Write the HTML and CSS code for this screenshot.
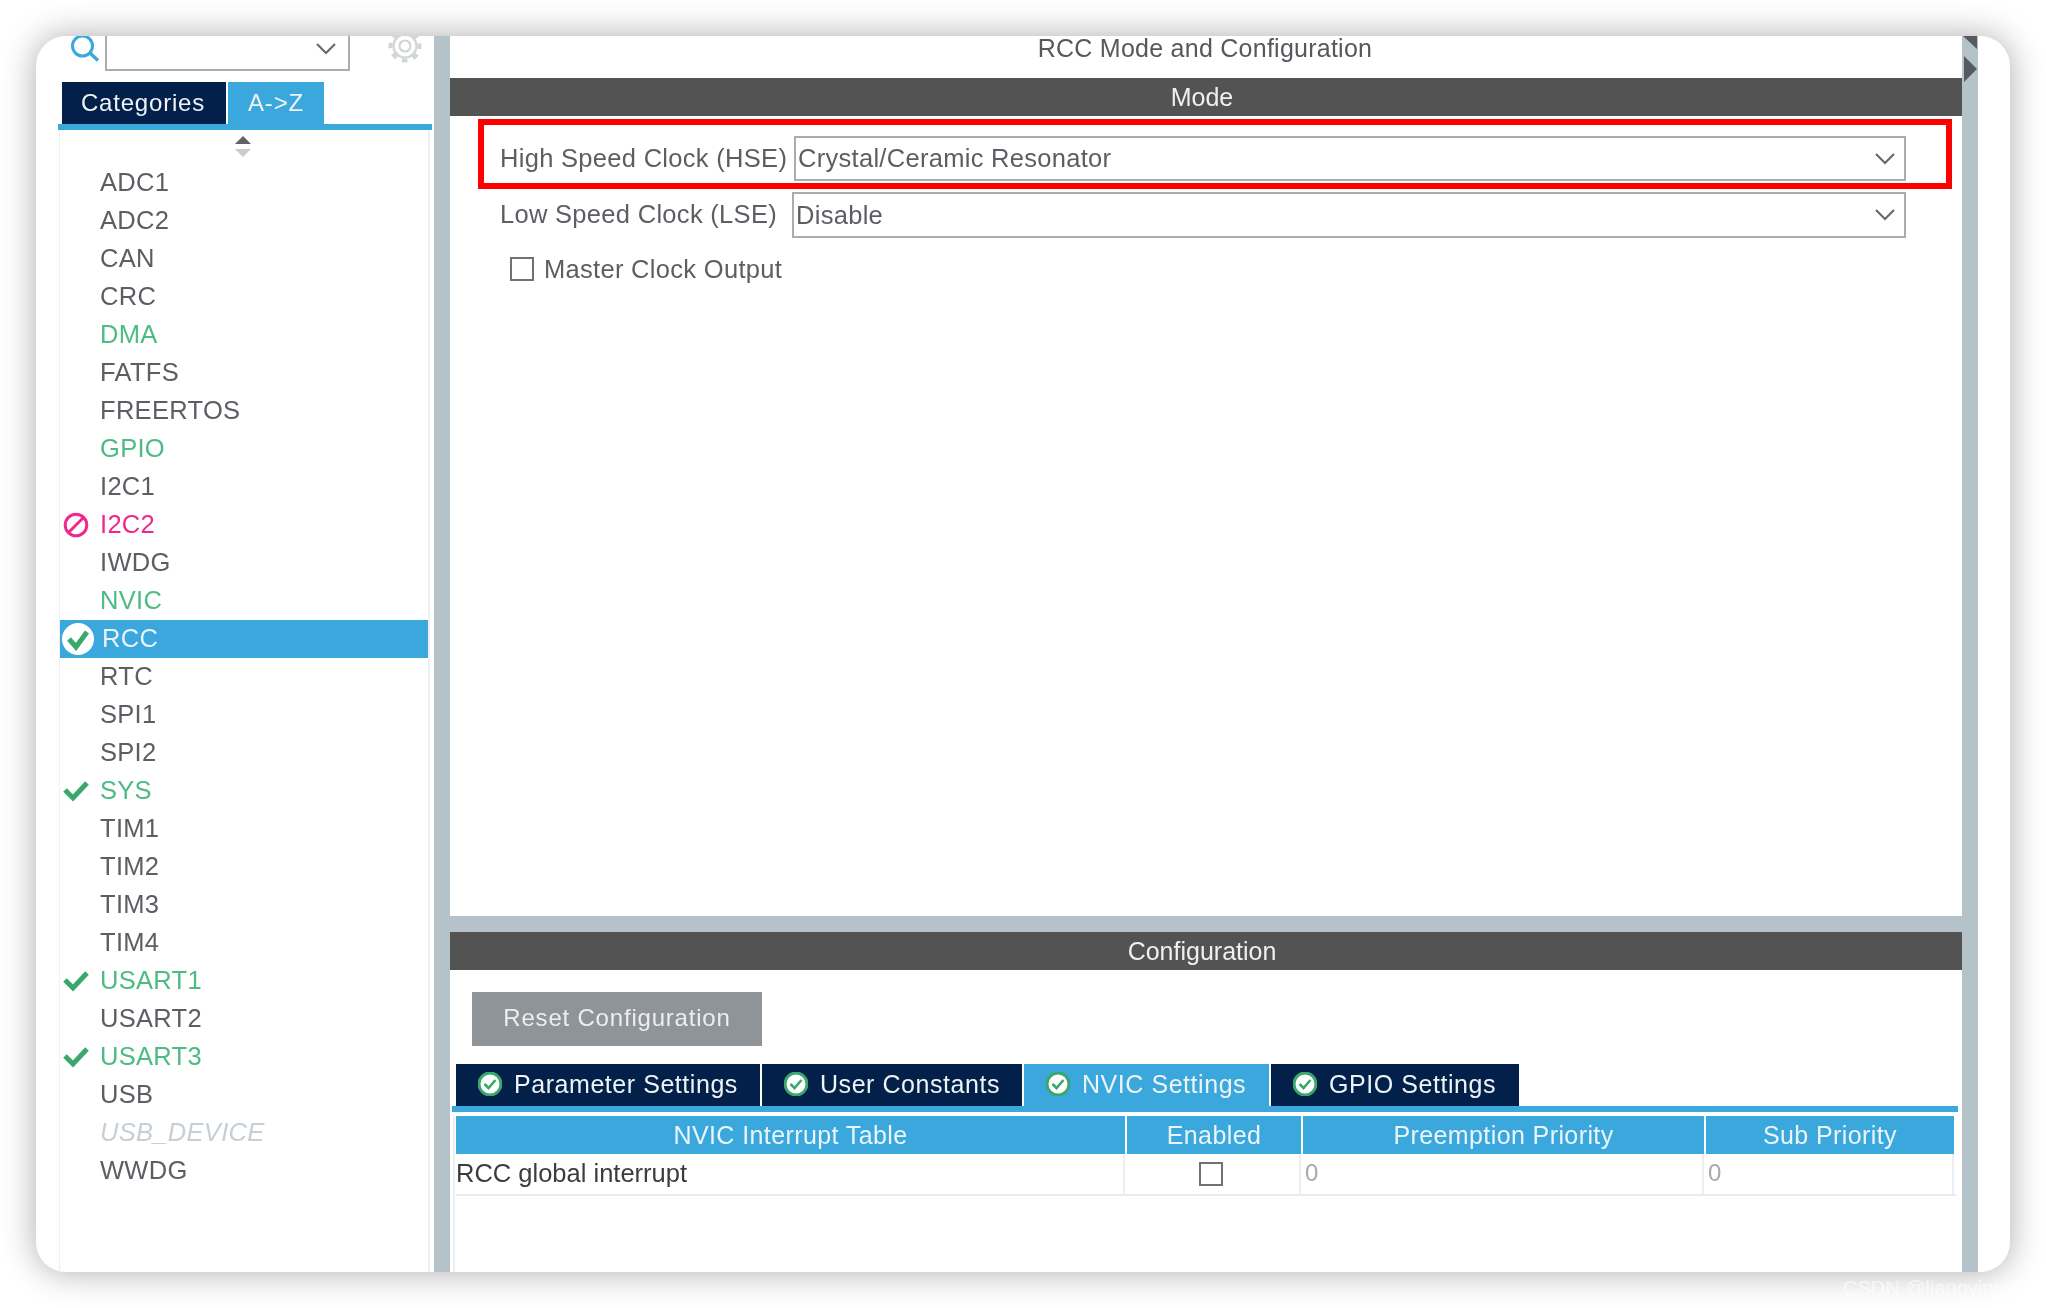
FILE: index.html
```html
<!DOCTYPE html>
<html lang="en">
<head>
<meta charset="utf-8">
<title>RCC Mode and Configuration</title>
<link rel="stylesheet" href="styles.css">
</head>
<body>
<div class="card">
  <aside class="left">
    <div class="tools">
      <svg class="search" viewBox="0 0 30 26" width="30" height="26"><circle cx="12.5" cy="10" r="10" fill="none" stroke="#39a8dc" stroke-width="3"/><path d="M20 17l8 7.5" stroke="#39a8dc" stroke-width="3.4" fill="none"/></svg>
      <div class="combo small"><svg class="chev" viewBox="0 0 20 12" width="20" height="12"><path d="M1 1l9 9 9-9" fill="none" stroke="#666a6e" stroke-width="2.2"/></svg></div>
      <svg class="gear" viewBox="0 0 34 28" width="34" height="28"><circle cx="17" cy="10" r="11.5" fill="none" stroke="#d2d5d8" stroke-width="2.2"/><circle cx="17" cy="10" r="14.5" fill="none" stroke="#d2d5d8" stroke-width="4" stroke-dasharray="5.5 5.89" stroke-dashoffset="2.75" transform="rotate(-90 17 10)"/><circle cx="17" cy="10" r="5.5" fill="none" stroke="#d2d5d8" stroke-width="2.2"/></svg>
    </div>
    <div class="tabs side">
      <div class="tab dark wide">Categories</div>
      <div class="tab blue">A-&gt;Z</div>
    </div>
    <div class="list">
      <svg class="sort" viewBox="0 0 18 22" width="18" height="22"><path d="M9 0l8 8H1z" fill="#5f6367"/><path d="M9 21l8-8H1z" fill="#c9cccf"/></svg>
      <div class="rows">
        <div class="row">ADC1</div>
        <div class="row">ADC2</div>
        <div class="row">CAN</div>
        <div class="row">CRC</div>
        <div class="row ok">DMA</div>
        <div class="row">FATFS</div>
        <div class="row">FREERTOS</div>
        <div class="row ok">GPIO</div>
        <div class="row">I2C1</div>
        <div class="row bad"><svg class="mark" viewBox="0 0 26 26" width="26" height="26"><circle cx="13" cy="13" r="10.8" fill="none" stroke="#f0288c" stroke-width="3"/><path d="M6 20L20 6" stroke="#f0288c" stroke-width="3"/></svg>I2C2</div>
        <div class="row">IWDG</div>
        <div class="row ok">NVIC</div>
        <div class="row sel"><svg class="mark big" viewBox="0 0 32 32" width="32" height="32"><circle cx="16" cy="16" r="16" fill="#fff"/><path d="M7 16l7 8L25 9" fill="none" stroke="#3aa76d" stroke-width="5"/></svg>RCC</div>
        <div class="row">RTC</div>
        <div class="row">SPI1</div>
        <div class="row">SPI2</div>
        <div class="row ok"><svg class="mark" viewBox="0 0 26 22" width="26" height="22"><path d="M2 10l8 8L24 3" fill="none" stroke="#3aa76d" stroke-width="5"/></svg>SYS</div>
        <div class="row">TIM1</div>
        <div class="row">TIM2</div>
        <div class="row">TIM3</div>
        <div class="row">TIM4</div>
        <div class="row ok"><svg class="mark" viewBox="0 0 26 22" width="26" height="22"><path d="M2 10l8 8L24 3" fill="none" stroke="#3aa76d" stroke-width="5"/></svg>USART1</div>
        <div class="row">USART2</div>
        <div class="row ok"><svg class="mark" viewBox="0 0 26 22" width="26" height="22"><path d="M2 10l8 8L24 3" fill="none" stroke="#3aa76d" stroke-width="5"/></svg>USART3</div>
        <div class="row">USB</div>
        <div class="row off">USB_DEVICE</div>
        <div class="row">WWDG</div>
      </div>
    </div>
  </aside>
  <div class="split"></div>
  <main class="main">
    <section class="upper">
      <div class="title">RCC Mode and Configuration</div>
      <div class="bar">Mode</div>
      <div class="hse">
        <span class="lbl">High Speed Clock (HSE)</span>
        <div class="combo field first"><span>Crystal/Ceramic Resonator</span><svg class="chev" viewBox="0 0 20 12" width="20" height="12"><path d="M1 1l9 9 9-9" fill="none" stroke="#666a6e" stroke-width="2.2"/></svg></div>
      </div>
      <div class="lse">
        <span class="lbl">Low Speed Clock (LSE)</span>
        <div class="combo field"><span>Disable</span><svg class="chev" viewBox="0 0 20 12" width="20" height="12"><path d="M1 1l9 9 9-9" fill="none" stroke="#666a6e" stroke-width="2.2"/></svg></div>
      </div>
      <div class="mco"><span class="box"></span><span class="lbl">Master Clock Output</span></div>
    </section>
    <div class="hsplit"></div>
    <section class="lower">
      <div class="bar">Configuration</div>
      <div class="btn">Reset Configuration</div>
      <div class="tabs conf">
        <div class="tab dark t1"><svg class="tick" viewBox="0 0 24 24" width="24" height="24"><circle cx="12" cy="12" r="11.5" fill="#fff"/><circle cx="12" cy="12" r="11" fill="none" stroke="#3aa76d" stroke-width="3"/><path d="M6.5 12l4 4 7-8" fill="none" stroke="#3aa76d" stroke-width="2.6"/></svg>Parameter Settings</div>
        <div class="tab dark t2"><svg class="tick" viewBox="0 0 24 24" width="24" height="24"><circle cx="12" cy="12" r="11.5" fill="#fff"/><circle cx="12" cy="12" r="11" fill="none" stroke="#3aa76d" stroke-width="3"/><path d="M6.5 12l4 4 7-8" fill="none" stroke="#3aa76d" stroke-width="2.6"/></svg>User Constants</div>
        <div class="tab blue t3"><svg class="tick" viewBox="0 0 24 24" width="24" height="24"><circle cx="12" cy="12" r="11.5" fill="#fff"/><circle cx="12" cy="12" r="11" fill="none" stroke="#3aa76d" stroke-width="3"/><path d="M6.5 12l4 4 7-8" fill="none" stroke="#3aa76d" stroke-width="2.6"/></svg>NVIC Settings</div>
        <div class="tab dark t4"><svg class="tick" viewBox="0 0 24 24" width="24" height="24"><circle cx="12" cy="12" r="11.5" fill="#fff"/><circle cx="12" cy="12" r="11" fill="none" stroke="#3aa76d" stroke-width="3"/><path d="M6.5 12l4 4 7-8" fill="none" stroke="#3aa76d" stroke-width="2.6"/></svg>GPIO Settings</div>
      </div>
      <div class="table">
        <div class="tr head">
          <div class="c c1">NVIC Interrupt Table</div>
          <div class="c c2">Enabled</div>
          <div class="c c3">Preemption Priority</div>
          <div class="c c4">Sub Priority</div>
        </div>
        <div class="tr body">
          <div class="c c1">RCC global interrupt</div>
          <div class="c c2"><span class="box"></span></div>
          <div class="c c3 zero">0</div>
          <div class="c c4 zero">0</div>
        </div>
      </div>
    </section>
  </main>
  <div class="split arrows">
    <svg viewBox="0 0 16 46" width="16" height="46"><path d="M1 0h14v13z" fill="#565a60"/><path d="M2 20l13 13-13 13z" fill="#565a60"/></svg>
  </div>
  <div class="gutter"></div>
</div>
<div class="mark-text">CSDN @liangying0728</div>
</body>
</html>
```

FILE: styles.css
```css
* { box-sizing: border-box; }
html, body { margin: 0; height: 100%; background: #fff; overflow: hidden; }
body { position: relative; font-family: "Liberation Sans", Arial, sans-serif; color: #55585c; padding: 36px; }
.card { width: 1974px; height: 1236px; background: #fff; border-radius: 30px; display: flex; box-shadow: 0 0 34px rgba(0,0,0,.33); filter: blur(.45px); }

.left { width: 398px; flex: none; display: flex; flex-direction: column; padding-left: 22px; }
.tools { height: 46px; display: flex; align-items: flex-start; }
.search { margin-left: 12px; margin-right: 5px; flex: none; }
.combo { border: 2px solid #a9adb0; display: flex; align-items: center; justify-content: flex-end; background: #fff; }
.combo.small { width: 245px; height: 35px; border-top: 0; padding: 0 12px 7px 0; }
.gear { margin-left: 38px; flex: none; }
.chev { flex: none; }

.tabs { display: flex; }
.tab { color: #eef3f6; font-size: 24px; letter-spacing: .8px; display: flex; align-items: center; height: 42px; white-space: nowrap; }
.dark { background: #022049; }
.blue { background: #3aa8dc; }
.tabs.side { gap: 2px; padding-left: 4px; margin-right: 2px; border-bottom: 6px solid #3aa8dc; height: 48px; }
.wide { width: 164px; justify-content: center; padding-right: 2px; }
.tabs.side .blue { width: 96px; justify-content: center; }

.list { flex: 1; margin-right: 4px; margin-left: 1px; padding-top: 6px; display: flex; flex-direction: column; border-left: 1px solid #eef1f4; border-right: 2px solid #eef1f4; }
.sort { align-self: center; flex: none; margin-right: 2px; }
.rows { margin-top: 6px; }
.row { height: 38px; display: flex; align-items: center; font-size: 25.5px; letter-spacing: .3px; padding: 0 0 2px 40px; position: relative; color: #5b5e62; }
.ok { color: #4dbb84; }
.bad { color: #f0288c; }
.off { color: #c6ced6; font-style: italic; }
.sel { background: #3aa8dc; color: #e8f4fa; padding-left: 42px; }
.mark { position: absolute; left: 3px; top: 50%; transform: translateY(-50%); }
.mark.big { left: 2px; }

.split { width: 16px; flex: none; background: #b6c2c9; }
.arrows { display: flex; flex-direction: column; }
.gutter { flex: 1; }

.main { width: 1512px; flex: none; display: flex; flex-direction: column; }
.upper { height: 880px; flex: none; }
.title { height: 42px; text-align: center; font-size: 25px; letter-spacing: .25px; line-height: 24px; padding-right: 2px; color: #55585c; }
.bar { height: 38px; background: #525352; color: #eef0f0; display: flex; align-items: center; justify-content: center; font-size: 25px; padding-right: 8px; }
.hse { margin: 3px 10px 0 28px; width: 1474px; height: 70px; border: 6px solid #f00; padding: 11px 0 0 16px; display: flex; align-items: flex-start; }
.lbl { font-size: 25.5px; line-height: 45px; white-space: nowrap; color: #5b5e62; letter-spacing: .3px; flex: none; }
.hse .lbl { width: 294px; }
.lse .lbl { width: 292px; }
.field { justify-content: space-between; height: 46px; padding: 0 9px 0 2px; font-size: 25.5px; color: #5b5e62; letter-spacing: .29px; }
.field.first { width: 1112px; height: 45px; }
.lse { display: flex; margin-top: 3px; padding-left: 50px; height: 46px; }
.lse .field { width: 1114px; }
.mco { display: flex; align-items: center; margin-top: 8px; padding-left: 60px; height: 46px; }
.mco .lbl { margin-left: 10px; }
.box { width: 24px; height: 24px; border: 2px solid #6e7175; display: block; flex: none; background: #fff; }

.hsplit { height: 16px; flex: none; background: #b6c2c9; }
.lower { flex: 1; }
.btn { margin: 22px 0 0 22px; width: 290px; height: 54px; background: #8f9499; color: #eceeef; display: flex; align-items: center; justify-content: center; font-size: 24px; letter-spacing: .8px; padding-bottom: 2px; }
.tabs.conf { margin: 18px 4px 0 2px; padding-left: 4px; border-bottom: 6px solid #3aa8dc; height: 48px; gap: 2px; }
.tick { margin-right: 12px; flex: none; }
.conf .tab { padding: 0 0 2px 22px; font-size: 25px; letter-spacing: .55px; }
.t1 { width: 304px; }
.t2 { width: 260px; }
.t3 { width: 245px; }
.t4 { width: 248px; }
.table { margin: 4px 0 0 3px; width: 1503px; padding-left: 1px; border-left: 2px solid #eef1f4; height: 156px; }
.tr { display: flex; gap: 2px; }
.head { height: 38px; }
.head .c { background: #3aa8dc; color: #eaf5fb; display: flex; align-items: center; justify-content: center; font-size: 25px; letter-spacing: .4px; }
.body { height: 42px; border-bottom: 2px solid #e8ecef; }
.body .c { display: flex; align-items: center; font-size: 25.5px; color: #3c3c40; border-right: 2px solid #eceff2; padding-bottom: 2px; }
.c1 { width: 669px; }
.c2 { width: 174px; }
.c3 { width: 401px; }
.c4 { width: 248px; }
.body .c2 { justify-content: center; padding: 0 4px 0 0; }
.body .zero { color: #a6a9ad; padding-left: 2px; font-size: 24px; }

.mark-text { position: absolute; left: 1843px; top: 1277px; font-size: 20px; color: rgba(255,255,255,.6); white-space: nowrap; }
```
